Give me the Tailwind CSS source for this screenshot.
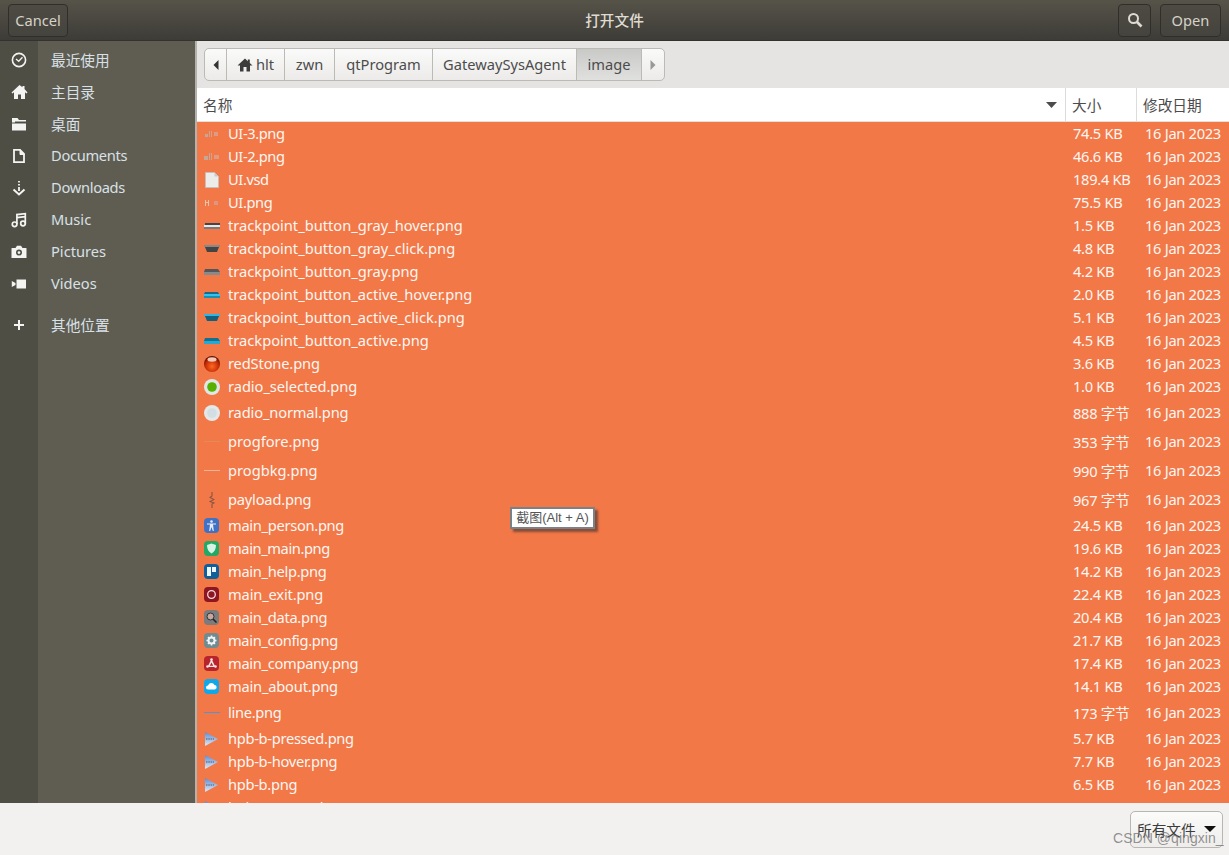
<!DOCTYPE html>
<html lang="zh">
<head>
<meta charset="utf-8">
<title>打开文件</title>
<script src="https://cdn.jsdelivr.net/npm/@tailwindcss/browser@4"></script>
</head>
<body class="relative h-[855px] w-[1229px] overflow-hidden bg-[#f2f1f0] font-['Noto_Sans','Noto_Sans_CJK_SC',sans-serif] text-[14.67px]">

<header class="grid h-[41px] grid-cols-[1fr_auto_1fr] items-center border-b border-[#33322e] bg-gradient-to-b from-[#565349] to-[#3d3c37] px-2 text-[#dfdbd2]">
  <div><button class="h-[33px] w-[60px] rounded-[4px] border border-[#2f2e2a] bg-[#4a4841]/60 text-[#d6d2c8]">Cancel</button></div>
  <div class="font-medium text-[#dfdbd2]">打开文件</div>
  <div class="flex justify-end">
    <button class="flex h-[33px] w-[33px] items-center justify-center rounded-[4px] border border-[#2f2e2a] bg-[#4a4841]/60">
      <svg width="16" height="16" viewBox="0 0 16 16" fill="none" stroke="#dfdbd2" stroke-width="2"><circle cx="6.500" cy="6.500" r="4.500"/><path d="M10 10l4.500 4.500" stroke-width="2.600"/></svg>
    </button>
    <button class="ml-[9px] h-[33px] w-[61px] rounded-[4px] border border-[#2f2e2a] bg-[#4a4841]/60 text-[#d6d2c8]">Open</button>
  </div>
</header>

<div class="flex h-[762px]">
  <aside class="flex w-[195px] shrink-0 text-[#d8e0e8]">
    <div class="flex w-[38px] flex-col items-center bg-[#4f4e45] pt-[3px] text-white">
      <div class="flex h-[32px] items-center"><svg width="16" height="16" viewBox="0 0 16 16" fill="none" stroke="#f4f4f2" stroke-width="1.600"><circle cx="8" cy="8" r="6.600"/><path d="M5 7l2.700 2.300L11.500 5.200" stroke-width="1.300"/></svg></div>
      <div class="flex h-[32px] items-center"><svg width="17" height="16" viewBox="0 0 17 16"><path fill="#f4f4f2" d="M8.500 1L0.500 8.500 1.500 9.500 3 8.200V15h4v-4.500h3V15h4V8.200l1.500 1.300 1-1L13.500 5V2h-2v1.200z"/></svg></div>
      <div class="flex h-[32px] items-center"><svg width="16" height="16" viewBox="0 0 16 16" fill="#f4f4f2"><path d="M1 2h5.500l1.500 2h7v1.500H4v1H1zM1 7.500h14V14.500H1z"/></svg></div>
      <div class="flex h-[32px] items-center"><svg width="16" height="16" viewBox="0 0 16 16" fill="none" stroke="#f4f4f2" stroke-width="1.800"><path d="M3 1.900h6l4 4V14.100H3z"/><path d="M9 1.500v5h4.500" fill="#f4f4f2" stroke-width="1"/></svg></div>
      <div class="flex h-[32px] items-center"><svg width="16" height="16" viewBox="0 0 16 16" fill="none" stroke="#f4f4f2" stroke-width="2"><path d="M8 1v1.500M8 4v1.500M8 7v4" stroke-width="1.800"/><path d="M2.500 9.500L8 14.500l5.500-5"/></svg></div>
      <div class="flex h-[32px] items-center"><svg width="16" height="16" viewBox="0 0 16 16" fill="none" stroke="#f4f4f2" stroke-width="1.700"><circle cx="3.600" cy="12.300" r="2.300"/><circle cx="12" cy="11.500" r="2.300"/><path d="M5.900 12V2.600l8.400-1V11.500M5.900 5.600l8.400-1"/></svg></div>
      <div class="flex h-[32px] items-center"><svg width="16" height="16" viewBox="0 0 16 16"><path fill="#f4f4f2" fill-rule="evenodd" d="M1 4h3.500L6 1.800h4L11.500 4H15a.5.5 0 0 1 .5.5V14H.5V4.500A.5.5 0 0 1 1 4zM8 5.600a3 3 0 1 0 0 6 3 3 0 0 0 0-6zm0 1.600a1.400 1.400 0 1 1 0 2.800 1.400 1.400 0 0 1 0-2.800z"/></svg></div>
      <div class="flex h-[32px] items-center"><svg width="16" height="16" viewBox="0 0 16 16" fill="#f4f4f2"><path d="M5.500 3.500H15v9H5.500zM.8 5l3.700 2v2L.8 11z"/></svg></div>
      <div class="mt-[9px] flex h-[32px] items-center"><svg width="16" height="16" viewBox="0 0 16 16" fill="#f4f4f2"><path d="M7 3h2v4h4v2H9v4H7V9H3V7h4z"/></svg></div>
    </div>
    <nav class="flex-1 bg-[#5f5d51] pl-[13px] pt-[3px]">
      <div class="flex h-[32px] items-center">最近使用</div>
      <div class="flex h-[32px] items-center">主目录</div>
      <div class="flex h-[32px] items-center">桌面</div>
      <div class="flex h-[32px] items-center pb-[2px] tracking-[-0.3px]">Documents</div>
      <div class="flex h-[32px] items-center pb-[2px] tracking-[-0.3px]">Downloads</div>
      <div class="flex h-[32px] items-center pb-[2px]">Music</div>
      <div class="flex h-[32px] items-center pb-[2px]">Pictures</div>
      <div class="flex h-[32px] items-center pb-[2px]">Videos</div>
      <div class="mt-[9px] flex h-[32px] items-center">其他位置</div>
    </nav>
  </aside>
  <div class="w-[2px] shrink-0 bg-[#b3b3ac]"></div>

  <main class="flex min-w-0 flex-1 flex-col">
    <div class="flex h-[47px] shrink-0 items-center bg-[#e5e4e2] pl-[7px]">
      <div class="flex h-[33px] items-stretch rounded-[5px] border border-[#bcbab5] bg-gradient-to-b from-[#fafafa] to-[#ecebe9] text-[#4c4c4c]">
        <div class="flex w-[22px] items-center justify-center border-r border-[#bcbab5]"><svg width="6" height="10" viewBox="0 0 6 10" fill="#333"><path d="M5.500 0v10L.5 5z"/></svg></div>
        <div class="flex w-[58px] items-center justify-center gap-[3px] border-r border-[#bcbab5]"><svg width="16" height="14" viewBox="0 0 16 14"><path fill="#3c3c3c" d="M8 .5L.5 7.500H3V13.500H6.500V9h3v4.500H13V7.500h2.500L12.800 5V1.500h-2V3.200z"/></svg><span class="-translate-y-px">hlt</span></div>
        <div class="flex w-[50px] items-center justify-center border-r border-[#bcbab5] pb-[2px]">zwn</div>
        <div class="flex w-[98px] items-center justify-center border-r border-[#bcbab5] pb-[2px]">qtProgram</div>
        <div class="flex w-[144px] items-center justify-center border-r border-[#bcbab5] pb-[2px]">GatewaySysAgent</div>
        <div class="flex w-[65px] items-center justify-center border-r border-[#bcbab5] bg-gradient-to-b from-[#c9c9c7] to-[#e0e0de] pb-[2px]">image</div>
        <div class="flex w-[22px] items-center justify-center"><svg width="6" height="10" viewBox="0 0 6 10" fill="#999"><path d="M.5 0v10l5-5z"/></svg></div>
      </div>
    </div>

    <div class="flex h-[34px] shrink-0 items-center border-b border-[#e4e0dc] bg-white text-[#4c4c4c]">
      <div class="flex h-full flex-1 items-center justify-between border-r border-[#dedcd9] pl-[6px] pr-[8px]"><span>名称</span><svg width="11" height="6" viewBox="0 0 11 6" fill="#4c4c4c"><path d="M0 0h11L5.500 6z"/></svg></div>
      <div class="flex h-full w-[71px] items-center border-r border-[#dedcd9] pl-[6px]">大小</div>
      <div class="flex h-full w-[92px] items-center pl-[6px]">修改日期</div>
    </div>

    <div class="min-h-0 flex-1 overflow-hidden bg-[#f27847] tracking-[-0.3px] text-[#fdf6f2]">
      <div class="flex h-[23px] items-center pb-[2px]"><div class="flex w-[31px] shrink-0 translate-y-px justify-center pr-[2px]"><svg width="16" height="8" viewBox="0 0 16 8"><path fill="#c9a595" d="M1 4h3v3H1zM5 1h1v6H5zM7 1h1v6H7z"/><path fill="#e09a80" d="M10 2h4v4h-4z"/></svg></div><div class="flex-1 tracking-[-0.4px]">UI-3.png</div><div class="w-[79px] pl-[7px]">74.5 KB</div><div class="w-[84px]">16 Jan 2023</div></div>
      <div class="flex h-[23px] items-center pb-[2px]"><div class="flex w-[31px] shrink-0 translate-y-px justify-center pr-[2px]"><svg width="16" height="8" viewBox="0 0 16 8"><path fill="#c9a595" d="M0 3h4v4H0zM5 0h1v7H5zM7 0h1v7H7z"/><path fill="#e09a80" d="M10 2h5v4h-5z"/></svg></div><div class="flex-1 tracking-[-0.4px]">UI-2.png</div><div class="w-[79px] pl-[7px]">46.6 KB</div><div class="w-[84px]">16 Jan 2023</div></div>
      <div class="flex h-[23px] items-center pb-[2px]"><div class="flex w-[31px] shrink-0 translate-y-px justify-center pr-[2px]"><svg width="14" height="16" viewBox="0 0 14 16"><path fill="#ececea" stroke="#c2c2c0" stroke-width=".8" d="M.5.500h9l4 4v11H.500z"/><path fill="#c9c9c7" d="M9.500.500v4h4z"/></svg></div><div class="flex-1 tracking-[-0.4px]">UI.vsd</div><div class="w-[79px] pl-[7px]">189.4 KB</div><div class="w-[84px]">16 Jan 2023</div></div>
      <div class="flex h-[23px] items-center pb-[2px]"><div class="flex w-[31px] shrink-0 translate-y-px justify-center pr-[2px]"><svg width="14" height="6" viewBox="0 0 14 6"><path fill="#e6c3b3" d="M0 0h1v6H0zM3 0h1v6H3zM1 2h2v1H1z"/><path fill="#df9680" d="M9 1h4v4H9z"/></svg></div><div class="flex-1 tracking-[-0.4px]">UI.png</div><div class="w-[79px] pl-[7px]">75.5 KB</div><div class="w-[84px]">16 Jan 2023</div></div>
      <div class="flex h-[23px] items-center pb-[2px]"><div class="flex w-[31px] shrink-0 translate-y-px justify-center pr-[2px]"><svg width="16" height="6" viewBox="0 0 16 6"><path fill="#44444a" d="M1 0h15v2H1z"/><path fill="#e8e8e8" d="M0 2h16v2H0z"/><path fill="#7a7a7a" d="M0 4h16v2H0z"/></svg></div><div class="flex-1 tracking-normal">trackpoint_button_gray_hover.png</div><div class="w-[79px] pl-[7px]">1.5 KB</div><div class="w-[84px]">16 Jan 2023</div></div>
      <div class="flex h-[23px] items-center pb-[2px]"><div class="flex w-[31px] shrink-0 translate-y-px justify-center pr-[2px]"><svg width="16" height="7" viewBox="0 0 16 7"><path fill="#888" d="M0 0h16v2H0z"/><path fill="#444" d="M1 2h14l-2 5H3z"/></svg></div><div class="flex-1 tracking-normal">trackpoint_button_gray_click.png</div><div class="w-[79px] pl-[7px]">4.8 KB</div><div class="w-[84px]">16 Jan 2023</div></div>
      <div class="flex h-[23px] items-center pb-[2px]"><div class="flex w-[31px] shrink-0 translate-y-px justify-center pr-[2px]"><svg width="16" height="6" viewBox="0 0 16 6"><path fill="#55555a" d="M1 0h13l2 3H0z"/><path fill="#8a8a8a" d="M0 3h16v3H0z"/></svg></div><div class="flex-1 tracking-normal">trackpoint_button_gray.png</div><div class="w-[79px] pl-[7px]">4.2 KB</div><div class="w-[84px]">16 Jan 2023</div></div>
      <div class="flex h-[23px] items-center pb-[2px]"><div class="flex w-[31px] shrink-0 translate-y-px justify-center pr-[2px]"><svg width="16" height="6" viewBox="0 0 16 6"><path fill="#1c6b86" d="M1 0h13l1 2H0z"/><path fill="#36c1ea" d="M0 2h16v2H0z"/><path fill="#1a8fb4" d="M0 4h16v2H0z"/></svg></div><div class="flex-1 tracking-normal">trackpoint_button_active_hover.png</div><div class="w-[79px] pl-[7px]">2.0 KB</div><div class="w-[84px]">16 Jan 2023</div></div>
      <div class="flex h-[23px] items-center pb-[2px]"><div class="flex w-[31px] shrink-0 translate-y-px justify-center pr-[2px]"><svg width="16" height="7" viewBox="0 0 16 7"><path fill="#2fb6e2" d="M0 0h16v2H0z"/><path fill="#145f7c" d="M1 2h14l-2 5H3z"/></svg></div><div class="flex-1 tracking-normal">trackpoint_button_active_click.png</div><div class="w-[79px] pl-[7px]">5.1 KB</div><div class="w-[84px]">16 Jan 2023</div></div>
      <div class="flex h-[23px] items-center pb-[2px]"><div class="flex w-[31px] shrink-0 translate-y-px justify-center pr-[2px]"><svg width="16" height="6" viewBox="0 0 16 6"><path fill="#15708f" d="M1 0h13l2 3H0z"/><path fill="#25a8d2" d="M0 3h16v3H0z"/></svg></div><div class="flex-1 tracking-normal">trackpoint_button_active.png</div><div class="w-[79px] pl-[7px]">4.5 KB</div><div class="w-[84px]">16 Jan 2023</div></div>
      <div class="flex h-[23px] items-center pb-[2px]"><div class="flex w-[31px] shrink-0 translate-y-px justify-center pr-[2px]"><svg width="16" height="16" viewBox="0 0 16 16"><defs><radialGradient id="rs" cx=".5" cy=".65" r=".6"><stop offset="0" stop-color="#ff6a20"/><stop offset=".7" stop-color="#c52a05"/><stop offset="1" stop-color="#5c1204"/></radialGradient></defs><circle cx="8" cy="8" r="8" fill="url(#rs)"/><ellipse cx="8" cy="3.500" rx="4.500" ry="2.200" fill="#f3c9b8"/></svg></div><div class="flex-1 tracking-[-0.15px]">redStone.png</div><div class="w-[79px] pl-[7px]">3.6 KB</div><div class="w-[84px]">16 Jan 2023</div></div>
      <div class="flex h-[23px] items-center pb-[2px]"><div class="flex w-[31px] shrink-0 translate-y-px justify-center pr-[2px]"><svg width="16" height="16" viewBox="0 0 16 16"><circle cx="8" cy="8" r="8" fill="#dfe6e6"/><circle cx="8" cy="8" r="4.800" fill="#56b000"/></svg></div><div class="flex-1 tracking-[-0.05px]">radio_selected.png</div><div class="w-[79px] pl-[7px]">1.0 KB</div><div class="w-[84px]">16 Jan 2023</div></div>
      <div class="flex h-[29px] items-center pb-[2px]"><div class="flex w-[31px] shrink-0 translate-y-px justify-center pr-[2px]"><svg width="16" height="16" viewBox="0 0 16 16"><circle cx="8" cy="8" r="8" fill="#e4e8e8"/><circle cx="8" cy="8" r="4.800" fill="#d3dde4"/></svg></div><div class="flex-1 tracking-[-0.15px]">radio_normal.png</div><div class="w-[79px] translate-y-px pl-[7px]">888 字节</div><div class="w-[84px]">16 Jan 2023</div></div>
      <div class="flex h-[29px] items-center pb-[2px]"><div class="flex w-[31px] shrink-0 translate-y-px justify-center pr-[2px]"><div class="h-px w-[16px] bg-[#e28a5a]"></div></div><div class="flex-1 tracking-normal">progfore.png</div><div class="w-[79px] translate-y-px pl-[7px]">353 字节</div><div class="w-[84px]">16 Jan 2023</div></div>
      <div class="flex h-[29px] items-center pb-[2px]"><div class="flex w-[31px] shrink-0 translate-y-px justify-center pr-[2px]"><div class="h-px w-[16px] bg-[#f3b39a]"></div></div><div class="flex-1 tracking-normal">progbkg.png</div><div class="w-[79px] translate-y-px pl-[7px]">990 字节</div><div class="w-[84px]">16 Jan 2023</div></div>
      <div class="flex h-[29px] items-center pb-[2px]"><div class="flex w-[31px] shrink-0 translate-y-px justify-center pr-[2px]"><svg width="6" height="16" viewBox="0 0 6 16" fill="none" stroke="#8a5544" stroke-width="1.100"><path d="M3 0v4L1 5.500 5 7.500 1 9.500 5 11 3 12v4"/></svg></div><div class="flex-1 tracking-[-0.2px]">payload.png</div><div class="w-[79px] translate-y-px pl-[7px]">967 字节</div><div class="w-[84px]">16 Jan 2023</div></div>
      <div class="flex h-[23px] items-center pb-[2px]"><div class="flex w-[31px] shrink-0 translate-y-px justify-center pr-[2px]"><svg width="15" height="15" viewBox="0 0 15 15"><rect width="15" height="15" rx="4" fill="#3f72c4"/><circle cx="7.500" cy="3.500" r="1.300" fill="#e8eef8"/><path d="M3 5.500h9v1H9l.8 6.500h-1L7.500 9 6.200 13h-1L6 6.500H3z" fill="#e8eef8"/></svg></div><div class="flex-1">main_person.png</div><div class="w-[79px] pl-[7px]">24.5 KB</div><div class="w-[84px]">16 Jan 2023</div></div>
      <div class="flex h-[23px] items-center pb-[2px]"><div class="flex w-[31px] shrink-0 translate-y-px justify-center pr-[2px]"><svg width="15" height="15" viewBox="0 0 15 15"><rect width="15" height="15" rx="4" fill="#23a866"/><path d="M7.500 2.500l4.500 1.500c0 4-1.500 7-4.500 8.500C4.500 11 3 8 3 4z" fill="#d8f2e4"/></svg></div><div class="flex-1 tracking-[-0.4px]">main_main.png</div><div class="w-[79px] pl-[7px]">19.6 KB</div><div class="w-[84px]">16 Jan 2023</div></div>
      <div class="flex h-[23px] items-center pb-[2px]"><div class="flex w-[31px] shrink-0 translate-y-px justify-center pr-[2px]"><svg width="15" height="15" viewBox="0 0 15 15"><rect width="15" height="15" rx="4" fill="#0e5f9a"/><path d="M3 3h4v9H3zM8 3h4v5H8z" fill="#f0f6fb"/></svg></div><div class="flex-1">main_help.png</div><div class="w-[79px] pl-[7px]">14.2 KB</div><div class="w-[84px]">16 Jan 2023</div></div>
      <div class="flex h-[23px] items-center pb-[2px]"><div class="flex w-[31px] shrink-0 translate-y-px justify-center pr-[2px]"><svg width="15" height="15" viewBox="0 0 15 15"><rect width="15" height="15" rx="4" fill="#8e1622"/><circle cx="7.500" cy="7.500" r="3.800" fill="none" stroke="#f3dcdc" stroke-width="1.300"/></svg></div><div class="flex-1 tracking-[-0.15px]">main_exit.png</div><div class="w-[79px] pl-[7px]">22.4 KB</div><div class="w-[84px]">16 Jan 2023</div></div>
      <div class="flex h-[23px] items-center pb-[2px]"><div class="flex w-[31px] shrink-0 translate-y-px justify-center pr-[2px]"><svg width="15" height="15" viewBox="0 0 15 15"><rect width="15" height="15" rx="4" fill="#7c7c7c"/><circle cx="6.500" cy="6.500" r="3.500" fill="#c9a6a0" stroke="#333" stroke-width="1"/><path d="M9 9l3.500 3.500" stroke="#222" stroke-width="1.600"/></svg></div><div class="flex-1">main_data.png</div><div class="w-[79px] pl-[7px]">20.4 KB</div><div class="w-[84px]">16 Jan 2023</div></div>
      <div class="flex h-[23px] items-center pb-[2px]"><div class="flex w-[31px] shrink-0 translate-y-px justify-center pr-[2px]"><svg width="15" height="15" viewBox="0 0 15 15"><rect width="15" height="15" rx="4" fill="#6f8c92"/><circle cx="7.500" cy="7.500" r="3" fill="none" stroke="#f0f4f5" stroke-width="2"/><path d="M7.500 2.500v2M7.500 10.500v2M2.500 7.500h2M10.500 7.500h2M4 4l1.400 1.400M9.600 9.600L11 11M11 4L9.600 5.400M5.400 9.600L4 11" stroke="#f0f4f5" stroke-width="1.500"/></svg></div><div class="flex-1 tracking-[-0.35px]">main_config.png</div><div class="w-[79px] pl-[7px]">21.7 KB</div><div class="w-[84px]">16 Jan 2023</div></div>
      <div class="flex h-[23px] items-center pb-[2px]"><div class="flex w-[31px] shrink-0 translate-y-px justify-center pr-[2px]"><svg width="15" height="15" viewBox="0 0 15 15"><rect width="15" height="15" rx="4" fill="#b8242c"/><path d="M7.500 3L3.500 11h8zM7.500 6.500L5.800 9.700h3.400z" fill="#f6e4e4" fill-rule="evenodd"/><circle cx="7.500" cy="3.500" r="1.300" fill="#f6e4e4"/><circle cx="11.500" cy="10.500" r="1.300" fill="#f6e4e4"/><circle cx="3.500" cy="10.500" r="1.300" fill="#f6e4e4"/></svg></div><div class="flex-1 tracking-[-0.3px]">main_company.png</div><div class="w-[79px] pl-[7px]">17.4 KB</div><div class="w-[84px]">16 Jan 2023</div></div>
      <div class="flex h-[23px] items-center pb-[2px]"><div class="flex w-[31px] shrink-0 translate-y-px justify-center pr-[2px]"><svg width="15" height="15" viewBox="0 0 15 15"><rect width="15" height="15" rx="4" fill="#11a8ea"/><path d="M4 10.500a2 2 0 0 1 0-4 3.500 3.500 0 0 1 6.500-.5 2.300 2.300 0 0 1 .5 4.500z" fill="#fff"/></svg></div><div class="flex-1 tracking-[-0.2px]">main_about.png</div><div class="w-[79px] pl-[7px]">14.1 KB</div><div class="w-[84px]">16 Jan 2023</div></div>
      <div class="flex h-[29px] items-center pb-[2px]"><div class="flex w-[31px] shrink-0 translate-y-px justify-center pr-[2px]"><div class="h-px w-[16px] bg-[#5b8fcf]"></div></div><div class="flex-1">line.png</div><div class="w-[79px] translate-y-px pl-[7px]">173 字节</div><div class="w-[84px]">16 Jan 2023</div></div>
      <div class="flex h-[23px] items-center pb-[2px]"><div class="flex w-[31px] shrink-0 translate-y-px justify-center pr-[2px]"><svg width="15" height="16" viewBox="0 0 15 16"><defs><linearGradient id="hp" x1="0" y1="0" x2="0" y2="1"><stop offset="0" stop-color="#5b8ed6"/><stop offset="1" stop-color="#dfe9f6"/></linearGradient></defs><path d="M1 1l13 7L1 15z" fill="url(#hp)"/><path d="M2 8h8" stroke="#556" stroke-dasharray="1.500 .8"/></svg></div><div class="flex-1">hpb-b-pressed.png</div><div class="w-[79px] pl-[7px]">5.7 KB</div><div class="w-[84px]">16 Jan 2023</div></div>
      <div class="flex h-[23px] items-center pb-[2px]"><div class="flex w-[31px] shrink-0 translate-y-px justify-center pr-[2px]"><svg width="15" height="16" viewBox="0 0 15 16"><path d="M1 1l13 7L1 15z" fill="url(#hp)"/><path d="M2 8h8" stroke="#556" stroke-dasharray="1.500 .8"/></svg></div><div class="flex-1">hpb-b-hover.png</div><div class="w-[79px] pl-[7px]">7.7 KB</div><div class="w-[84px]">16 Jan 2023</div></div>
      <div class="flex h-[23px] items-center pb-[2px]"><div class="flex w-[31px] shrink-0 translate-y-px justify-center pr-[2px]"><svg width="15" height="16" viewBox="0 0 15 16"><path d="M1 1l13 7L1 15z" fill="url(#hp)"/><path d="M2 8h8" stroke="#556" stroke-dasharray="1.500 .8"/></svg></div><div class="flex-1">hpb-b.png</div><div class="w-[79px] pl-[7px]">6.5 KB</div><div class="w-[84px]">16 Jan 2023</div></div>
      <div class="flex h-[23px] items-center pb-[2px]"><div class="flex w-[31px] shrink-0 translate-y-px justify-center pr-[2px]"><svg width="15" height="16" viewBox="0 0 15 16"><path d="M1 1l13 7L1 15z" fill="url(#hp)"/></svg></div><div class="flex-1">hpb-a-pressed.png</div><div class="w-[79px] pl-[7px]">5.7 KB</div><div class="w-[84px]">16 Jan 2023</div></div>
    </div>
  </main>
</div>

<footer class="flex h-[52px] items-center justify-end bg-[#f2f1f0] pr-[6px]">
  <div class="flex h-[37px] w-[93px] items-center justify-between rounded-[5px] border border-[#b8b6b1] bg-gradient-to-b from-[#fbfbfa] to-[#eeedeb] pl-[6px] pr-[6px] text-[#3c3c3c]">
    <span class="translate-y-px">所有文件</span>
    <svg width="12" height="6" viewBox="0 0 12 6" fill="#111"><path d="M0 0h12L6 6z"/></svg>
  </div>
</footer>

<div class="absolute left-[510px] top-[507px] flex h-[22px] w-[85px] items-center justify-center border-2 border-[#7a8288] bg-white font-['Liberation_Sans','Noto_Sans_CJK_SC',sans-serif] text-[13px] text-[#555] shadow-[3px_3px_2px_rgba(90,60,50,0.7)]">截图(Alt + A)</div>

<div class="absolute left-[1113px] top-[830px] whitespace-nowrap font-['Liberation_Sans',sans-serif] text-[14px] leading-[16px] tracking-[0.05px] text-[#777]/80">CSDN @qingxin_</div>

</body>
</html>
